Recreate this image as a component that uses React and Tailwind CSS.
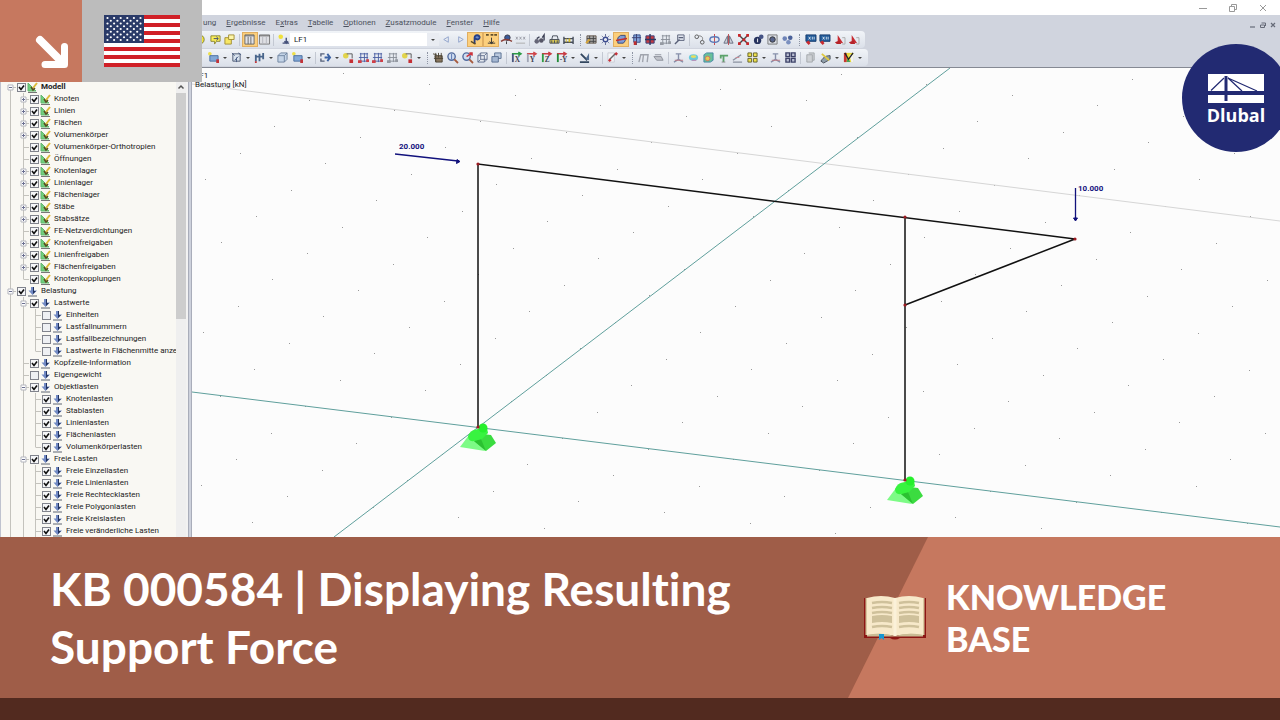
import React from 'react';

const MENU = [
  ['', '', 'ung'],
  ['', 'E', 'rgebnisse'],
  ['E', 'x', 'tras'],
  ['', 'T', 'abelle'],
  ['', 'O', 'ptionen'],
  ['', 'Z', 'usatzmodule'],
  ['', 'F', 'enster'],
  ['', 'H', 'ilfe'],
];

const TREE = [
  { level: 0, label: 'Modell', box: '-', on: true, bold: true },
  { level: 1, label: 'Knoten', box: '+', on: true },
  { level: 1, label: 'Linien', box: '+', on: true },
  { level: 1, label: 'Flächen', box: '+', on: true },
  { level: 1, label: 'Volumenkörper', box: '+', on: true },
  { level: 1, label: 'Volumenkörper-Orthotropien', on: true },
  { level: 1, label: 'Öffnungen', on: true },
  { level: 1, label: 'Knotenlager', box: '+', on: true },
  { level: 1, label: 'Linienlager', box: '+', on: true },
  { level: 1, label: 'Flächenlager', on: true },
  { level: 1, label: 'Stäbe', box: '+', on: true },
  { level: 1, label: 'Stabsätze', box: '+', on: true },
  { level: 1, label: 'FE-Netzverdichtungen', on: true },
  { level: 1, label: 'Knotenfreigaben', box: '+', on: true },
  { level: 1, label: 'Linienfreigaben', box: '+', on: true },
  { level: 1, label: 'Flächenfreigaben', box: '+', on: true },
  { level: 1, label: 'Knotenkopplungen', on: true, last: true },
  { level: 0, label: 'Belastung', box: '-', on: true, load: true },
  { level: 1, label: 'Lastwerte', box: '-', on: true, load: true },
  { level: 2, label: 'Einheiten', on: false, load: true },
  { level: 2, label: 'Lastfallnummern', on: false, load: true },
  { level: 2, label: 'Lastfallbezeichnungen', on: false, load: true },
  { level: 2, label: 'Lastwerte in Flächenmitte anze', on: false, load: true, last: true },
  { level: 1, label: 'Kopfzeile-Information', on: true, load: true },
  { level: 1, label: 'Eigengewicht', on: false, load: true },
  { level: 1, label: 'Objektlasten', box: '-', on: true, load: true },
  { level: 2, label: 'Knotenlasten', on: true, load: true },
  { level: 2, label: 'Stablasten', on: true, load: true },
  { level: 2, label: 'Linienlasten', on: true, load: true },
  { level: 2, label: 'Flächenlasten', on: true, load: true },
  { level: 2, label: 'Volumenkörperlasten', on: true, load: true, last: true },
  { level: 1, label: 'Freie Lasten', box: '-', on: true, load: true },
  { level: 2, label: 'Freie Einzellasten', on: true, load: true },
  { level: 2, label: 'Freie Linienlasten', on: true, load: true },
  { level: 2, label: 'Freie Rechtecklasten', on: true, load: true },
  { level: 2, label: 'Freie Polygonlasten', on: true, load: true },
  { level: 2, label: 'Freie Kreislasten', on: true, load: true },
  { level: 2, label: 'Freie veränderliche Lasten', on: true, load: true },
];

const LETTERS = {
  X: 'X',
  Y: 'Y',
  Z: 'Z',
  minus: '-Y',
};

const axis = (h, v, letter) => (
  <>
    <path d="M1 2h9M8 0l3 2-3 2" stroke={h} fill="none" strokeWidth="1.6" />
    <path d="M2 2v9" stroke={v} strokeWidth="2" />
    <text x="4" y="11" fontSize="8" fontWeight="bold" fill="#445" fontFamily="Liberation Serif, serif">{LETTERS[letter]}</text>
  </>
);

const grid = (color, accent) => (
  <>
    <path d="M2 2h9M1 6h10M1 10h11M3 1v10M7 1v10M10 1v10" stroke={color} strokeWidth="1" fill="none" />
    <path d="M0 9h4v3H0zM9 8h3v3H9z" fill={accent} />
  </>
);

const GLYPHS = {
  bulb: <><circle cx="5" cy="6" r="5" fill="#f3e43c" stroke="#777a30" /><path d="M5 3v5" stroke="#555" /></>,
  note: <><path d="M1 2h10v6H7l-2 3V8H1z" fill="#fbee58" stroke="#8a8433" /><path d="M4 5h5M7 3l2 2-2 2" stroke="#3b4770" fill="none" /></>,
  folder: <><path d="M1 4h7v7H1z" fill="#f8e765" stroke="#a18d35" /><path d="M5 1h6v5H5z" fill="#fdf6a8" stroke="#a18d35" /></>,
  table: <><path d="M1 1h10v10H1z" fill="#e2e2e6" stroke="#666" /><path d="M1 2h10M4.500 3v8M7.500 3v8" stroke="#666" /></>,
  tableWide: <><path d="M.500 1h11v10H.500z" fill="#dedfe3" stroke="#777" /><path d="M0 2h12" stroke="#666" /><path d="M4 3v8M8 3v8" stroke="#b5b7be" /></>,
  star: <><circle cx="3" cy="3" r="2.500" fill="#efe13c" /><path d="M5 10h7M9 4v6M7 8l2 2 2-2" stroke="#44507a" fill="none" strokeWidth="1.500" /></>,
  left: <path d="M8 3L3 6l5 3z" fill="none" stroke="#8fa2cc" />,
  right: <path d="M4 3l5 3-5 3z" fill="none" stroke="#8fa2cc" />,
  flag: <><path d="M5 11V4c0-4 6-3 5.500 0-1 3-3.500 2-5 1" fill="#6d8bc9" stroke="#263f86" strokeWidth="2" /><path d="M1 8l5 3" stroke="#5a4a2a" strokeWidth="1.500" /></>,
  values: <><path d="M0 1h3M5 1h3M9 1h3" stroke="#64512d" strokeWidth="2" /><path d="M2 10h8M6 4v6M4 8l2 3 2-3" stroke="#333" fill="none" /></>,
  eye: <><circle cx="7" cy="4" r="3" fill="#3a5a9a" stroke="#334" /><path d="M0 8c4-3 7-3 12 0" stroke="#8a3d36" strokeWidth="1.500" fill="none" /><path d="M6 8v3" stroke="#333" /></>,
  xxx: <><path d="M1 3l2 3M3 3L1 6M5 3l2 3M7 3L5 6M9 3l2 3M11 3L9 6" stroke="#9a9ca6" /><path d="M1 10h10" stroke="#aaa" /></>,
  glasses: <><circle cx="3" cy="8" r="2.500" fill="#667" /><circle cx="8" cy="7" r="2.500" fill="#556" /><path d="M3 5l3-2M9 4l2-3v6" stroke="#3c4055" fill="none" strokeWidth="1.500" /></>,
  train: <><path d="M1 6h10v4H1z" fill="#d8c755" stroke="#444b58" /><path d="M3 6l1-4h5l1 4M3 7v3M6 7v3M9 7v3" fill="none" stroke="#444b58" /></>,
  abacus: <><path d="M1 3v8M11 3v8M1 5h10M1 9h10" stroke="#444b58" strokeWidth="1.500" /><path d="M3 5h1v4H3zM6 5h2v4H6z" fill="#d3b928" /></>,
  sheet: <><path d="M1 2h10v8H1z" fill="#aaa" stroke="#65584b" /><path d="M1 5h10M1 8h10M4 2v8M8 2v8" stroke="#444" /><path d="M0 10l4-4" stroke="#d6a63a" strokeWidth="2" /></>,
  target: <><circle cx="6" cy="6" r="2.500" fill="none" stroke="#3b4b8f" strokeWidth="1.500" /><path d="M6 0v3M6 9v3M0 6h3M9 6h3M2 2l1 1M10 2L9 3M2 10l1-1M10 10L9 9" stroke="#5b6590" /></>,
  cube: <><path d="M2 4l3-2.500h5v6L8 10H2z" fill="#7f9bd6" stroke="#344576" /><path d="M0 7l12-2" stroke="#c32c2c" strokeWidth="1.600" /></>,
  mesh: <><path d="M3 1h7v8H3z" fill="#85a4db" stroke="#324b85" /><path d="M1 4h10M6 0v12" stroke="#3b3f70" /><path d="M3 8h3v4H3z" fill="#c02e2e" /></>,
  redSquare: <><path d="M1 2h9v8H1z" fill="#c63a40" stroke="#35437d" /><path d="M0 6h12M5.500 0v12" stroke="#2d3561" strokeWidth="1.500" /></>,
  grayGrid: grid('#8a8f99', '#959aa3'),
  pinkGrid: grid('#4b5fa3', '#d13f45'),
  wrench: <><path d="M4 1h7v6H4z" fill="#dfe4ee" stroke="#596078" /><path d="M6 6l-5 5M5 4h5" stroke="#596078" strokeWidth="1.500" /></>,
  link: <><circle cx="3" cy="3" r="2" fill="none" stroke="#555" /><circle cx="9" cy="9" r="2" fill="none" stroke="#555" /><path d="M5 2c4 0 5 2 4 5" fill="none" stroke="#777" /></>,
  rotate: <><path d="M6 0v12" stroke="#c43e42" /><ellipse cx="6" cy="6" rx="5" ry="3" fill="none" stroke="#5c79b7" strokeWidth="1.500" /></>,
  mirror: <><path d="M5 2v8H1zM7 2v8h4z" fill="#ccd0da" stroke="#686f80" /><path d="M6 0v12" stroke="#b9454a" /></>,
  cross: <><path d="M1 1l10 10M11 1L1 11" stroke="#444" strokeWidth="1.500" /><path d="M0 0h3v3H0zM9 0h3v3H9zM0 9h3v3H0zM9 9h3v3H9zM5 5h3v3H5z" fill="#c9272b" /></>,
  info: <><circle cx="5" cy="7" r="4" fill="#27345f" /><circle cx="9" cy="3" r="2.500" fill="#465485" /><path d="M5 5v4" stroke="#fff" /></>,
  camera: <><path d="M1 1h10v10H1z" fill="#dce0e7" stroke="#777" /><circle cx="6" cy="6" r="3" fill="#58658c" stroke="#333" /></>,
  balls: <><circle cx="3" cy="5" r="2.500" fill="#6e84b8" /><circle cx="9" cy="4" r="2.500" fill="#4b629a" /><circle cx="7" cy="9" r="2.500" fill="#7b90bf" /></>,
  monitor: <><path d="M1 1h11v7H1z" fill="#235e9c" stroke="#183c6d" /><path d="M4 3l2 3M6 3L4 6M8 3v3M10 3v3" stroke="#fff" strokeWidth=".8" /><path d="M1 9l3-2 2 3-2 2z" fill="#c82a30" /></>,
  redTool: <><path d="M4 1v8l6 1z" fill="#c62a30" /><path d="M1 9l5-2 2 4H3z" fill="#b52228" /><path d="M9 4h3v7H9" fill="none" stroke="#aaa" /></>,
  solid: <><circle cx="2" cy="2" r="2" fill="#eee04a" /><path d="M2 4h9v6H2z" fill="#82a8d7" stroke="#496d9e" /><path d="M9 8h3v4H9z" fill="#c23338" /></>,
  frame: <><path d="M2 2h8v8H2z" fill="#d8e2ed" stroke="#46546e" /><path d="M1 1l3 3M8 1l3 2M4 9l4-4M6 6v5" stroke="#475b83" /></>,
  columns: <><path d="M2 3v7M6 2v8M10 1v7M2 5h8" stroke="#48658b" strokeWidth="2" /><path d="M1 10h2v2H1z" fill="#bf3538" /></>,
  box: <path d="M1 4l3-3h7v7l-3 3H1zM1 4h7v7M8 4l3-3" fill="#c4d4e7" stroke="#6d83a0" />,
  steps: <><path d="M5 2H1v3M5 10H1V7" fill="none" stroke="#55617b" strokeWidth="1.500" /><path d="M5 6h6M8 2l3 4-3 4" fill="none" stroke="#3b62a4" strokeWidth="2" /></>,
  point: <><circle cx="3" cy="4" r="3" fill="#e2d44c" /><path d="M4 2h6v5" fill="none" stroke="#555" /><path d="M7 8h4v4H7z" fill="#c52f35" /></>,
  zoom: <><circle cx="5" cy="5" r="4" fill="#cfddf1" stroke="#526b9e" strokeWidth="1.500" /><path d="M8 8l4 4" stroke="#a75b3f" strokeWidth="2" /><path d="M5 2v6" stroke="#536ead" /></>,
  zoomRed: <><circle cx="5" cy="5" r="4" fill="#cfddf1" stroke="#526b9e" strokeWidth="1.500" /><path d="M8 8l4 4" stroke="#a75b3f" strokeWidth="2" /><path d="M5 5l6-4M8 1h3v3" stroke="#cc343d" strokeWidth="1.500" fill="none" /></>,
  hand: <><path d="M2 4h8v7H3z" fill="#87755e" stroke="#4c4434" /><path d="M0 2l4 1M3 1v10M6 1v5M9 1v5M1 7h10" stroke="#4c4434" /></>,
  wire: <path d="M1 4l3-3h7v7l-3 3H1zM1 4h7v7M8 4l3-3M4 1v7h7M4 8l-3 3" fill="none" stroke="#61718f" />,
  boxes: <><path d="M4 1h7v6H4z" fill="#bac9df" stroke="#586d91" /><path d="M1 5h7v6H1z" fill="#a5b7d2" stroke="#586d91" /></>,
  axisX: axis('#2d9b45', '#47567f', 'X'),
  axisY: axis('#d0464a', '#a0a5b4', 'Y'),
  axisZ: axis('#c93d44', '#2e9c44', 'Z'),
  axisMinus: axis('#c93d44', '#238b39', 'minus'),
  pen: <><path d="M1 11h10M2 2l7 7" stroke="#33475f" strokeWidth="2" /><path d="M7 8l4-7v8z" fill="#526d91" /></>,
  brush: <><path d="M1 1h7v10H1z" fill="#f4f5f8" stroke="#c9ccd4" /><path d="M3 8l6-6" stroke="#666" strokeWidth="1.500" /><path d="M1 9l2-2 2 2-2 2zM8 2l2-2 2 2-2 2z" fill="#c5333c" /></>,
  portal: <path d="M1 11l2-8h8l-1 8M6 3l-1 8" fill="none" stroke="#a0a4ad" strokeWidth="1.500" />,
  plate: <path d="M1 5h8l2 4H4zM2 3h7" fill="#c1c4cb" stroke="#8b8f99" />,
  support: <><path d="M3 2h6M6 2v6M1 11l5-3 5 3" fill="none" stroke="#8790aa" strokeWidth="1.500" /><path d="M2 9h9" stroke="#c07680" /></>,
  rainbow: <><ellipse cx="6" cy="6" rx="5" ry="3.500" fill="#6bcadb" /><ellipse cx="6" cy="5" rx="3" ry="1.500" fill="#e6dd5f" /><path d="M4 9h5" stroke="#c579ac" /></>,
  heat: <><path d="M1 3l3-2h7v8l-3 2H1z" fill="#67c09a" stroke="#4586a5" /><circle cx="5" cy="7" r="2.500" fill="#e3ce51" stroke="#d67262" /></>,
  plant: <><path d="M6 3v8M2 4h9M3 3v4" stroke="#5ca36b" strokeWidth="2" /><path d="M4 11h4" stroke="#888" /></>,
  beam: <><path d="M1 9l9-6M1 11h10" stroke="#8b91a0" strokeWidth="1.500" /><path d="M4 6h4" stroke="#ca8891" /></>,
  tiles: <path d="M1 1h4v4H1zM7 1h4v4H7zM1 7h4v4H1zM7 7h4v4H7z" fill="#eee04c" stroke="#63602a" />,
  panes: <path d="M1 1h4v4H1zM7 1h4v4H7zM1 7h4v4H1zM7 7h4v4H7z" fill="#b9bed2" stroke="#3d4268" strokeWidth="1.500" />,
  paper: <path d="M2 3h6v8H2zM4 1h6v8H8" fill="#ced1d5" stroke="#a2a6ab" />,
  paint: <><path d="M1 10c3-5 6-6 10-6v4L4 12z" fill="#8f9eaa" stroke="#454c55" /><path d="M2 2l8 7" stroke="#dfc941" strokeWidth="2" /></>,
  palette: <><path d="M1 1h10v10H1z" fill="#e9dc3b" /><path d="M1 1h3v10H1z" fill="#c83637" /><path d="M5 6l3 5H4z" fill="#4aa05a" /><path d="M7 3h4v8H9z" fill="#f2f2f2" /><path d="M2 1l4 7 5-7" fill="none" stroke="#252525" strokeWidth="1.500" /></>,
};

// "*" marks a pressed button, "v" a drop-down arrow
const ROW_ONE = [
  { width: 'w-[44px]', items: 'bulb note folder' },
  { sep: true },
  { width: 'w-[29px]', items: '*table tableWide' },
  { sep: true },
  { width: 'w-[14px]', items: 'star' },
  { combo: true },
  { width: 'w-[88px]', items: 'left right *flag *values eye xxx' },
  { sep: true },
  { width: 'w-[44px]', items: 'glasses train abacus' },
  { grip: true },
  { width: 'w-[103px]', items: 'sheet target *cube mesh redSquare grayGrid wrench' },
  { sep: true },
  { width: 'w-[103px]', items: 'link rotate mirror cross info camera balls' },
  { grip: true },
  { width: 'w-[58px]', items: 'monitor monitor redTool redTool' },
];

const ROW_TWO = [
  { width: 'w-[107px]', items: 'solid v frame v columns v box solid v' },
  { sep: true },
  { width: 'w-[105px]', items: 'steps v point pinkGrid pinkGrid grayGrid point v' },
  { grip: true },
  { width: 'w-[73px]', items: 'hand zoom zoomRed wire boxes' },
  { sep: true },
  { width: 'w-[91px]', items: 'axisX axisY axisZ axisMinus v pen v' },
  { sep: true },
  { width: 'w-[23px]', items: 'brush v' },
  { grip: true },
  { width: 'w-[30px]', items: 'portal plate' },
  { sep: true },
  { width: 'w-[127px]', items: 'support rainbow heat plant beam tiles v support panes' },
  { sep: true },
  { width: 'w-[61px]', items: 'paper paint v palette v' },
];

const ToolGroup = ({ width, items }) => (
  <div className={`flex h-full shrink-0 items-center ${width}`}>
    {items.split(' ').map((raw, i) => {
      if (raw === 'v') {
        return (
          <button key={i} type="button" aria-label="Mehr" className="flex w-2 shrink-0 justify-center">
            <svg viewBox="0 0 4 2" className="h-[2px] w-1"><path d="M0 0h4L2 2z" fill="#444" /></svg>
          </button>
        );
      }
      const active = raw.startsWith('*');
      const name = raw.replace('*', '');
      return (
        <button
          key={i}
          type="button"
          aria-label={name}
          className={`flex h-[15px] min-w-0 flex-1 items-center justify-center ${
            active ? 'border border-[#e0ae62] bg-[#fccf7c]' : ''
          }`}
        >
          <svg viewBox="0 0 12 12" className="h-[11px] w-[11px] shrink-0 overflow-visible">{GLYPHS[name]}</svg>
        </button>
      );
    })}
  </div>
);

const Toolbar = ({ groups, pad }) => (
  <div className={`flex h-[17px] w-fit items-center rounded-r bg-linear-to-b from-[#f1f4f8] to-[#dbe0e9] pr-1 ${pad}`}>
    {groups.map((g, i) => {
      if (g.sep) {
        return <div key={i} className="flex w-[5px] shrink-0 justify-center"><div className="h-3 w-px bg-[#c3c8d2]" /></div>;
      }
      if (g.grip) {
        return <div key={i} className="flex w-2 shrink-0 justify-center"><div className="h-3 border-l border-dotted border-[#8d94a3]" /></div>;
      }
      if (g.combo) {
        return (
          <div key={i} className="flex h-[13px] w-[149px] shrink-0 bg-white">
            <select aria-label="Lastfall" className="min-w-0 flex-1 appearance-none pl-1 text-[8px] leading-[13px] text-[#222]">
              <option>LF1</option>
            </select>
            <span className="flex w-3 items-center justify-center bg-[#e9ecf2]">
              <svg viewBox="0 0 4 2" className="h-[2px] w-1"><path d="M0 0h4L2 2z" fill="#444" /></svg>
            </span>
          </div>
        );
      }
      return <ToolGroup key={i} width={g.width} items={g.items} />;
    })}
  </div>
);

const ModelIcon = () => (
  <svg viewBox="0 0 11 11" className="h-[11px] w-[11px] shrink-0">
    <path d="M1 1v8h8z" fill="#6fd07c" stroke="#63b570" />
    <path d="M4 5l2 3 2-2" fill="none" stroke="#5b4a20" strokeWidth="1.500" />
    <path d="M6 6l4-5" stroke="#dcb93a" strokeWidth="2" />
    <path d="M1 10.500h9" stroke="#777" />
  </svg>
);

const LoadIcon = () => (
  <svg viewBox="0 0 11 11" className="h-[11px] w-[11px] shrink-0">
    <path d="M4 1h3v3.500h3L5.500 9 1.500 4.500H4z" fill="#7189c4" />
    <path d="M6 1h1v4h2L6 8z" fill="#22335f" />
    <path d="M1 10h9" stroke="#5d6473" />
  </svg>
);

const Branch = ({ box, last, top }) => (
  <svg viewBox="0 0 12 12" className="h-3 w-3 shrink-0">
    <path
      d={`M6.500 ${top ? 6 : 0}V${last ? 6 : 12}M6.500 6.500H12`}
      stroke="#c4c3bd"
      fill="none"
    />
    {box && <path d="M4 4h5v5H4z" fill="#fff" stroke="#b3b5bd" />}
    {box && <path d={box === '+' ? 'M5 6.500h3M6.500 5v3' : 'M5 6.500h3'} stroke="#6a6f90" />}
  </svg>
);

const Guide = () => (
  <svg viewBox="0 0 12 12" className="h-3 w-3 shrink-0">
    <path d="M6.500 0v12" stroke="#c4c3bd" />
  </svg>
);

const TreeRow = ({ item, first }) => (
  <li className="flex h-3 items-center">
    {item.level > 0 && <div className="mr-px flex"><Guide /></div>}
    {item.level > 1 && <Guide />}
    <Branch box={item.box} last={item.last} top={first} />
    <label className="flex items-center whitespace-nowrap">
      <input
        type="checkbox"
        defaultChecked={item.on}
        className="peer ml-px h-[9px] w-[9px] shrink-0 appearance-none border border-[#80838c] bg-[#eef0f3] checked:bg-[#f5f6f8]"
      />
      <svg viewBox="0 0 9 9" className="-ml-[9px] h-[9px] w-[9px] shrink-0 opacity-0 peer-checked:opacity-100">
        <path d="M2 4l2 2.500L7 2.500" stroke="#111" strokeWidth="1.600" fill="none" />
      </svg>
      <span className="mr-[3px] ml-px">{item.load ? <LoadIcon /> : <ModelIcon />}</span>
      <span className={item.bold ? 'font-bold' : ''}>{item.label}</span>
    </label>
  </li>
);

const Navigator = () => (
  <aside className="flex w-[192px] shrink-0 overflow-hidden border-l border-[#bfc3cf] bg-[#f9f8f3]">
    <ul className="min-w-0 flex-1 overflow-hidden pt-[13px] pl-[3px] text-[8px] leading-3 text-[#222]">
      {TREE.map((item, i) => <TreeRow key={i} item={item} first={i === 0} />)}
    </ul>
    <div className="flex w-[10px] shrink-0 flex-col bg-[#efefef] pt-[13px]">
      <svg viewBox="0 0 10 12" className="h-3 w-[10px] shrink-0">
        <path d="M2.500 7.500L5 5l2.500 2.500" stroke="#555" strokeWidth="1.500" fill="none" />
      </svg>
      <div className="h-[226px] shrink-0 bg-[#cdcdcd]" />
    </div>
    <div className="w-[2px] shrink-0 bg-[#f2f2f2]" />
    <div className="w-1 shrink-0 border-x border-[#a9adba] bg-[#cdd1dc]" />
  </aside>
);

// raster of the work plane, spanned by two skewed directions
const gridPoints = () => {
  const points = [];
  for (let j = -6; j < 18; j++) {
    for (let i = -14; i < 14; i++) {
      const x = Math.round(959 + i * 85.6 - j * 34.6);
      const y = Math.round(211 + i * 10.6 + j * 26.4);
      if (x > 194 && x < 1280 && y > 69 && y < 537) points.push([x, y]);
    }
  }
  return points;
};

const Support = ({ x, y }) => (
  <g transform={`translate(${x} ${y})`}>
    <path d="M-18 20L-9 8-5 3 2 6 7 24z" fill="#7dfb86" />
    <path d="M-4 14L5 7l8 1 5 8-10 8z" fill="#3bdc40" />
    <path d="M-4 14L8 24 3 12z" fill="#2bc231" />
    <path d="M-10 9Q-8 3 0 2l9-1 1 5-6 6-8 2q-6 1-6-5z" fill="#38f340" />
    <circle cx="5" cy="1" r="4.500" fill="#25f02c" />
  </g>
);

const ModelView = () => (
  <div className="relative min-w-0 flex-1 overflow-hidden bg-[#fcfcfc]">
    <svg viewBox="192 68 1088 469" preserveAspectRatio="xMinYMin slice" className="absolute inset-0 h-full w-full">
      {gridPoints().map(([x, y]) => (
        <rect key={`${x}-${y}`} x={x} y={y} width="1" height="1" fill="#999" />
      ))}
      <path d="M192 84L1280 221" stroke="#d6d6d6" />
      <path d="M192 392L1280 527M950 68L334 537" stroke="#5f9f9c" />
      <Support x={478} y={427} />
      <Support x={905} y={480} />
      <path d="M478 427V164L1075 239 905 305M905 217v263" stroke="#111" strokeWidth="1.500" fill="none" />
      {[[478, 164], [905, 217], [1075, 239], [905, 305], [478, 427], [905, 480]].map(([x, y]) => (
        <circle key={`${x}-${y}`} cx={x} cy={y} r="1.600" fill="#9c1a20" />
      ))}
      <g stroke="#11117c" fill="#11117c">
        <path d="M395 154l63 7" strokeWidth="1.300" />
        <path d="M457 159.500l3 2-3.500 2z" />
        <path d="M1075.500 188v31" strokeWidth="1.300" />
        <path d="M1073.500 218h4l-2 3z" />
      </g>
      <g fontFamily="Roboto, sans-serif" fontWeight="bold" fontSize="8" fill="#11117c">
        <text x="399" y="149">20.000</text>
        <text x="1078" y="191">10.000</text>
      </g>
    </svg>
    <p className="relative pt-[3px] pl-[3px] text-[8px] leading-[9px] text-[#222]">
      LF1<br />Belastung [kN]
    </p>
  </div>
);

const Flag = () => (
  <svg viewBox="0 0 76 52" className="h-[52px] w-[76px]">
    <path d="M0 0h76v52H0z" fill="#fff" />
    {[0, 8, 16, 24, 32, 40, 48].map((y) => (
      <rect key={y} y={y} width="76" height="4" fill="#d02027" />
    ))}
    <path d="M0 0h40v28H0z" fill="#2a3a68" />
    {Array.from({ length: 9 }).map((_, r) =>
      Array.from({ length: r % 2 ? 5 : 6 }).map((_, c) => (
        <circle key={`${r}-${c}`} cx={3.5 + (r % 2 ? 3.3 : 0) + c * 6.6} cy={3 + r * 2.75} r="1.100" fill="#fff" />
      ))
    )}
  </svg>
);

const WindowButtons = () => (
  <div className="flex h-full items-center gap-[22px] pr-[13px]">
    <button type="button" aria-label="Minimieren">
      <svg viewBox="0 0 8 8" className="h-2 w-2"><path d="M0 4.500h8" stroke="#999" /></svg>
    </button>
    <button type="button" aria-label="Verkleinern">
      <svg viewBox="0 0 8 8" className="h-2 w-2"><path d="M.500 2.500h5v5h-5zM2.500 2V.500h5v5H6" stroke="#999" fill="none" /></svg>
    </button>
    <button type="button" aria-label="Schließen">
      <svg viewBox="0 0 8 8" className="h-2 w-2"><path d="M1 1l6 6M7 1L1 7" stroke="#999" /></svg>
    </button>
  </div>
);

const ChildButtons = () => (
  <div className="flex items-center gap-1 pt-1 pr-1">
    <button type="button" aria-label="Fenster minimieren">
      <svg viewBox="0 0 6 6" className="h-[6px] w-[6px]"><path d="M0 5h5" stroke="#666b78" strokeWidth="1.200" /></svg>
    </button>
    <button type="button" aria-label="Fenster verkleinern">
      <svg viewBox="0 0 6 6" className="h-[6px] w-[6px]"><path d="M1.500 1h4v3M.500 3h4v2.500h-4z" stroke="#666b78" fill="none" /></svg>
    </button>
    <button type="button" aria-label="Fenster schließen">
      <svg viewBox="0 0 6 6" className="h-[6px] w-[6px]"><path d="M1 1l4 4M5 1L1 5" stroke="#666b78" strokeWidth="1.200" /></svg>
    </button>
  </div>
);

const Badge = () => (
  <div className="absolute top-0 left-0 flex h-[82px]">
    <div className="flex w-[82px] items-end justify-end bg-[#c6785f] pr-[13px] pb-[13px]">
      <svg viewBox="0 0 34 34" className="h-[34px] w-[34px]">
        <g stroke="#fff" strokeLinecap="round" strokeLinejoin="round" fill="none">
          <path d="M5 5l23 23" strokeWidth="8" />
          <path d="M29.500 11.500v18H10" strokeWidth="7" />
        </g>
      </svg>
    </div>
    <div className="flex w-[120px] items-center justify-center bg-[#bcbcbc]">
      <Flag />
    </div>
  </div>
);

const Logo = () => (
  <div className="absolute top-[44px] -right-[10px] flex h-[108px] w-[108px] flex-col items-center rounded-full bg-[#222a72] pt-[30px]">
    <svg viewBox="0 0 56 29" className="h-[29px] w-14">
      <path d="M0 0h56v17H0zM0 21h56v8H0z" fill="#fff" />
      <path d="M16.500 2h3v25h-3z" fill="#222a72" />
      <path d="M16 4L3 16.500M20 4l14 13M20 4l29 13" stroke="#222a72" strokeWidth="1.200" />
    </svg>
    <span className="mt-[2px] font-['Open_Sans',sans-serif] text-[18px] leading-5 font-bold text-white">Dlubal</span>
  </div>
);

const Book = () => (
  <svg viewBox="0 0 62 44" className="h-11 w-[62px] shrink-0">
    <path d="M0 2h62v40H36q-5 3-10 0H0z" fill="#8c1614" />
    <path d="M1.500 2h59v37h-59z" fill="#d6c79f" />
    <path d="M3 2Q17-2 31 2q14-4 28 0v37q-14-3-28 1Q17 36 3 39z" fill="#f7e9ca" />
    <path d="M3 39q14-3 28 1 14-4 28-1v1.500H3z" fill="#c9bb94" />
    <path d="M31 2v38" stroke="#fbf1d9" strokeWidth="3" />
    <path
      d="M8 7q10-2 20 0M8 12q10-2 20 0M8 17q10-2 20 0M8 31q10-2 20 0M35 7q10-2 20 0M35 12q10-2 20 0M35 17q10-2 20 0M35 31q10-2 20 0"
      stroke="#cfc19b"
      strokeWidth="2.500"
      fill="none"
    />
    <path d="M8 20q10-2 20 0v7q-10-2-20 0zM35 20q10-2 20 0v7q-10-2-20 0z" fill="#cfc19b" />
    <path d="M15 38h5v6l-2.500-2-2.500 2z" fill="#1696d2" />
  </svg>
);

const App = () => {
  return (
    <div className="relative flex h-screen flex-col overflow-hidden bg-white font-[Roboto,sans-serif]">
      <header className="shrink-0 border-b border-[#858993] bg-[#d0d4de]">
        <div className="flex h-[15px] justify-end bg-white">
          <WindowButtons />
        </div>
        <div className="flex h-4 items-center justify-between pl-[203px]">
          <nav className="flex gap-[10px] text-[8px] leading-4 text-[#4c515d]">
            {MENU.map(([pre, key, rest]) => (
              <button key={rest} type="button">
                {pre}<u>{key}</u>{rest}
              </button>
            ))}
          </nav>
          <ChildButtons />
        </div>
        <div className="flex flex-col gap-px pb-px">
          <Toolbar groups={ROW_ONE} pad="pl-[193px]" />
          <Toolbar groups={ROW_TWO} pad="pl-[206px]" />
        </div>
      </header>

      <main className="flex min-h-0 flex-1">
        <Navigator />
        <ModelView />
      </main>

      <Badge />
      <Logo />

      <section className="relative flex shrink-0 items-center bg-[#9f5d48] pt-[23px] pb-[22px] font-[Lato,sans-serif] text-white">
        <div className="absolute inset-y-0 right-0 w-[432px] bg-[#c6785f] [clip-path:polygon(80px_0,100%_0,100%_100%,0_100%)]" />
        <h1 className="relative min-w-0 flex-1 pr-[72px] pl-[50px] text-[46px] leading-[58px] font-bold [font-variant-ligatures:none]">
          KB 000584 | Displaying Resulting Support Force
        </h1>
        <div className="relative flex w-[416px] shrink-0 items-center gap-5">
          <Book />
          <p className="w-[240px] text-[34px] leading-[42px] font-black">KNOWLEDGE BASE</p>
        </div>
      </section>
      <footer className="h-[22px] shrink-0 bg-[#522a1f]" />
    </div>
  );
};

export default App;
